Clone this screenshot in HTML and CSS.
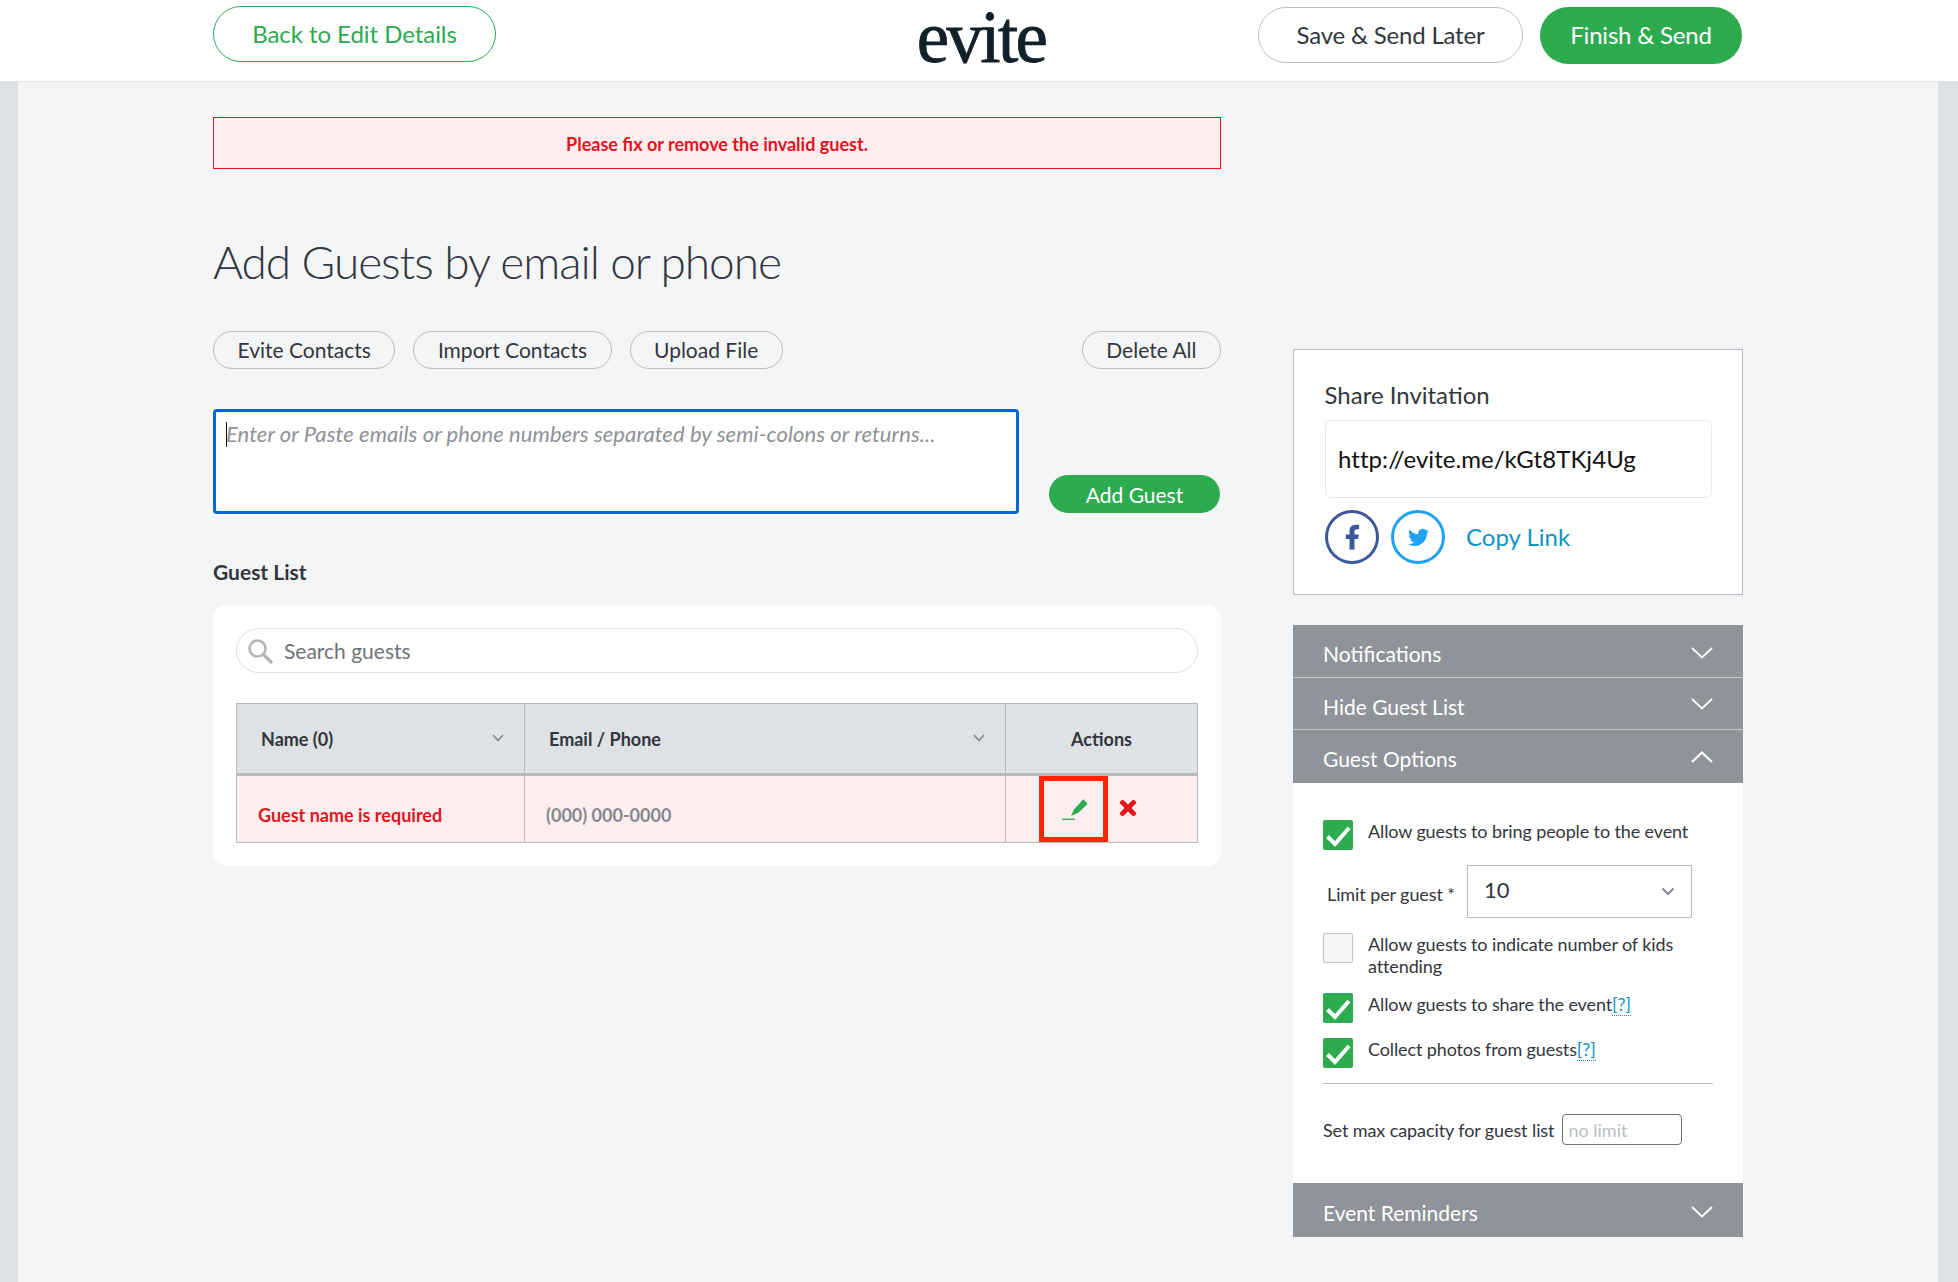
FILE: index.html
```html
<!DOCTYPE html>
<html lang="en">
<head>
<meta charset="utf-8">
<title>Add Guests</title>
<link rel="stylesheet" href="styles.css">
</head>
<body>
<header class="topbar">
  <div class="topbar-left"><a class="btn btn-outline-green">Back to Edit Details</a></div>
  <div class="logo">evite</div>
  <div class="topbar-right">
    <a class="btn btn-outline-gray">Save &amp; Send Later</a>
    <a class="btn btn-green">Finish &amp; Send</a>
  </div>
</header>
<main class="page">
  <section class="left">
    <div class="alert">Please fix or remove the invalid guest.</div>
    <h1 class="title">Add Guests by email or phone</h1>
    <div class="pills">
      <a class="pill">Evite Contacts</a>
      <a class="pill">Import Contacts</a>
      <a class="pill">Upload File</a>
      <a class="pill pill-end">Delete All</a>
    </div>
    <div class="entry">
      <div class="entry-field">
        <textarea class="entry-input" placeholder="Enter or Paste emails or phone numbers separated by semi-colons or returns..."></textarea>
        <span class="caret"></span>
      </div>
      <a class="add-guest">Add Guest</a>
    </div>
    <h2 class="list-title">Guest List</h2>
    <div class="card">
      <div class="search">
        <svg class="search-icon" viewBox="0 0 26 26" width="26" height="26"><circle cx="10.5" cy="10.5" r="8" fill="none" stroke="#b3b5b9" stroke-width="2.6"/><path d="M16.5 16.5L24 24" stroke="#b3b5b9" stroke-width="3.4" stroke-linecap="round"/></svg>
        <input class="search-input" placeholder="Search guests">
      </div>
      <table class="guests">
        <thead>
          <tr>
            <th class="col-name"><div class="th-in"><span>Name (0)</span><svg viewBox="0 0 12 8" width="12" height="8"><path d="M1 1l5 5.5L11 1" fill="none" stroke="#85888e" stroke-width="1.7"/></svg></div></th>
            <th class="col-email"><div class="th-in"><span>Email / Phone</span><svg viewBox="0 0 12 8" width="12" height="8"><path d="M1 1l5 5.5L11 1" fill="none" stroke="#85888e" stroke-width="1.7"/></svg></div></th>
            <th class="col-actions">Actions</th>
          </tr>
        </thead>
        <tbody>
          <tr>
            <td class="cell-error">Guest name is required</td>
            <td class="cell-phone">(000) 000-0000</td>
            <td class="cell-actions">
              <div class="actions">
                <a class="edit">
                  <svg viewBox="0 0 32 24" width="32" height="24"><path d="M13 19l3-6.700L25.300 2.300l4.400 4.400-9.400 9z" fill="#2dab4f"/><path d="M4 22.300h13" stroke="#2dab4f" stroke-width="1.300"/></svg>
                </a>
                <a class="remove">
                  <svg viewBox="0 0 16 16" width="16" height="16"><path d="M2.500 2.500l11 11M13.500 2.500l-11 11" stroke="#e0161f" stroke-width="4.800" stroke-linecap="round"/></svg>
                </a>
              </div>
            </td>
          </tr>
        </tbody>
      </table>
    </div>
  </section>
  <aside class="right">
    <div class="share">
      <h3 class="share-title">Share Invitation</h3>
      <div class="share-url">http://evite.me/kGt8TKj4Ug</div>
      <div class="share-actions">
        <a class="social social-fb"><svg viewBox="0 0 24 24" width="30" height="30"><path fill="#3b5998" d="M14 13.500h2.800l.7-3.600H14V7.600c0-1 .4-1.900 2-1.900h1.700V2.400C17.300 2.300 16 2.200 14.900 2.200 12 2.200 10 4 10 7.100v2.800H7v3.600h3V22h4z"/></svg></a>
        <a class="social social-tw"><svg viewBox="0 0 24 24" width="21" height="21"><path fill="#1da1f2" d="M23.953 4.570a10 10 0 01-2.825.775 4.958 4.958 0 002.163-2.723c-.951.555-2.005.959-3.127 1.184a4.920 4.920 0 00-8.384 4.482C7.690 8.095 4.067 6.130 1.640 3.162a4.822 4.822 0 00-.666 2.475c0 1.710.870 3.213 2.188 4.096a4.904 4.904 0 01-2.228-.616v.060a4.923 4.923 0 003.946 4.827 4.996 4.996 0 01-2.212.085 4.936 4.936 0 004.604 3.417 9.867 9.867 0 01-6.102 2.105c-.390 0-.779-.023-1.170-.067a13.995 13.995 0 007.557 2.209c9.053 0 13.998-7.496 13.998-13.985 0-.210 0-.420-.015-.630A9.935 9.935 0 0024 4.590z"/></svg></a>
        <a class="copy-link">Copy Link</a>
      </div>
    </div>
    <div class="accordion">
      <div class="acc-head acc-first"><span>Notifications</span><svg viewBox="0 0 22 12" width="22" height="12"><path d="M1 1l10 9.500L21 1" fill="none" stroke="#fff" stroke-width="1.800"/></svg></div>
      <div class="acc-head acc-second"><span>Hide Guest List</span><svg viewBox="0 0 22 12" width="22" height="12"><path d="M1 1l10 9.500L21 1" fill="none" stroke="#fff" stroke-width="1.800"/></svg></div>
      <div class="acc-head acc-open"><span>Guest Options</span><svg viewBox="0 0 22 12" width="22" height="12"><path d="M1 11l10-9.500L21 11" fill="none" stroke="#fff" stroke-width="2.200"/></svg></div>
      <div class="acc-body">
        <div class="option">
          <span class="check check-on"><svg viewBox="0 0 30 30" width="30" height="30"><path d="M4.500 16.500l7.500 7.500L26 8" fill="none" stroke="#fff" stroke-width="4"/></svg></span>
          <span class="option-text">Allow guests to bring people to the event</span>
        </div>
        <div class="limit">
          <span class="limit-label">Limit per guest *</span>
          <div class="select"><span class="select-value">10</span><svg viewBox="0 0 14 9" width="14" height="9"><path d="M1.500 1.500L7 7l5.500-5.500" fill="none" stroke="#85888e" stroke-width="2.200"/></svg></div>
        </div>
        <div class="option">
          <span class="check"></span>
          <span class="option-text">Allow guests to indicate number of kids attending</span>
        </div>
        <div class="option option-gap">
          <span class="check check-on"><svg viewBox="0 0 30 30" width="30" height="30"><path d="M4.500 16.500l7.500 7.500L26 8" fill="none" stroke="#fff" stroke-width="4"/></svg></span>
          <span class="option-text">Allow guests to share the event<a class="help">[?]</a></span>
        </div>
        <div class="option">
          <span class="check check-on"><svg viewBox="0 0 30 30" width="30" height="30"><path d="M4.500 16.500l7.500 7.500L26 8" fill="none" stroke="#fff" stroke-width="4"/></svg></span>
          <span class="option-text">Collect photos from guests<a class="help">[?]</a></span>
        </div>
        <hr class="rule">
        <div class="capacity">
          <span class="capacity-label">Set max capacity for guest list</span>
          <input class="capacity-input" placeholder="no limit">
        </div>
      </div>
      <div class="acc-head acc-last"><span>Event Reminders</span><svg viewBox="0 0 22 12" width="22" height="12"><path d="M1 1l10 9.500L21 1" fill="none" stroke="#fff" stroke-width="1.800"/></svg></div>
    </div>
  </aside>
</main>
</body>
</html>
```
FILE: styles.css
```css
* { box-sizing: border-box; }
html, body { margin: 0; height: 1282px; overflow: hidden; }
body { font-family: Lato, "Liberation Sans", sans-serif; color: #33363d; background: #f4f5f7; }
a { display: inline-block; }
h1, h2, h3 { margin: 0; font-weight: 400; }

.topbar {
  height: 82px;
  border-bottom: 1px solid #e1e3e6;
  background: #fff;
  padding: 6px 216px 0 213px;
  display: grid;
  grid-template-columns: 1fr auto 1fr;
  align-items: start;
}
.topbar-right { display: flex; justify-content: flex-end; gap: 17px; padding-top: 1px; }
.btn { border-radius: 29px; font-size: 24px; display: flex; align-items: center; justify-content: center; padding-bottom: 2px; }
.btn-outline-green { width: 283px; height: 56px; border: 1px solid #2dab4f; color: #2dab4f; letter-spacing: -0.05px; }
.btn-outline-gray { width: 265px; height: 56px; border: 1px solid #bfc0c4; color: #33363d; letter-spacing: -0.2px; }
.btn-green { width: 202px; height: 57px; background: #2dab4f; color: #fff; letter-spacing: -0.2px; }
.logo {
  font-family: "Liberation Serif", serif;
  font-size: 73px;
  line-height: 76px;
  margin-top: -6px;
  letter-spacing: -2.700px;
  color: #12202a;
  -webkit-text-stroke: 0.8px #12202a;
  margin-left: 7px;
}

.page { display: flex; height: 1200px; border-left: 18px solid #dee2e4; border-right: 20px solid #dee2e4; }
.left { width: 1008px; margin-left: 195px; }
.right { width: 450px; margin-left: 72px; padding-top: 267px; }

.alert {
  margin-top: 35px;
  height: 52px;
  padding-top: 1px;
  border: 1px solid #e0161f;
  background: #feeef0;
  color: #e0161f;
  font-size: 18px;
  font-weight: 700;
  display: flex;
  align-items: center;
  justify-content: center;
}
.title { margin-top: 65px; font-size: 46px; font-weight: 300; line-height: 56px; letter-spacing: -1.050px; color: #33363f; }
.pills { margin-top: 41px; display: flex; gap: 18px; }
.pill {
  height: 38px;
  padding: 0 23.500px;
  border: 1px solid #bcbdc2;
  border-radius: 19px;
  font-size: 21px;
  line-height: 36px;
}
.pill-end { margin-left: auto; }

.entry { margin-top: 40px; display: flex; align-items: flex-end; justify-content: space-between; }
.entry-field { position: relative; width: 806px; height: 105px; }
.entry-input {
  display: block;
  width: 100%;
  height: 100%;
  border: 3px solid #0366d6;
  border-radius: 4px;
  box-shadow: 0 0 0 1px #fff;
  padding: 9px 10px;
  font: 22px/26px Lato, sans-serif;
  letter-spacing: 0.080px;
  resize: none;
  outline: none;
  background: #fff;
}
.entry-input::placeholder { color: #8e9197; font-style: italic; opacity: 1; }
.caret { position: absolute; left: 13px; top: 13px; width: 1px; height: 25px; background: #111; }
.add-guest {
  width: 171px;
  height: 38px;
  margin: 0 1px 1px 0;
  border-radius: 19px;
  background: #2dab4f;
  color: #fff;
  font-size: 21px;
  line-height: 40px;
  text-align: center;
}

.list-title { margin-top: 46px; font-size: 21px; line-height: 24px; font-weight: 700; }
.card { margin-top: 21px; padding: 23px; background: #fff; border-radius: 14px; }
.search {
  height: 45px;
  border: 1px solid #dfe1e4;
  border-radius: 23px;
  display: flex;
  align-items: center;
  padding-left: 10px;
  gap: 11px;
}
.search-input { border: 0; outline: 0; flex: 1; font: 21px Lato, sans-serif; background: transparent; padding: 0; }
.search-input::placeholder { color: #6f7278; opacity: 1; }

.guests { margin-top: 30px; width: 962px; border-collapse: collapse; table-layout: fixed; }
.guests th {
  height: 71px;
  background: #dee2e4;
  border: 1px solid #b7b9bd;
  border-bottom-width: 3px;
  font-size: 18px;
  font-weight: 700;
  text-align: left;
  padding: 0 20px 0 24px;
}
.col-name { width: 288px; }
.col-email { width: 481px; }
.guests th.col-actions { text-align: center; padding: 0; }
.th-in { display: flex; align-items: center; justify-content: space-between; }
.th-in svg { margin-top: -2px; }
.guests td { height: 68px; background: #feeef0; border: 1px solid #b7b9bd; padding: 0; font-size: 18px; }
.guests .cell-error { color: #e0161f; font-weight: 700; padding: 11px 0 0 21px; }
.guests .cell-phone { color: #85888f; padding: 11px 0 0 21px; font-weight: 700; }
.cell-actions { vertical-align: top; }
.actions { display: flex; align-items: flex-start; padding-left: 33px; }
.edit {
  width: 69px;
  height: 66px;
  border: 5px solid #ff2600;
  padding: 16px 0 0 14px;
}
.edit svg { display: block; }
.remove { margin: 24px 0 0 12px; }
.remove svg { display: block; }

.share {
  height: 246px;
  border: 1px solid #b9bcc4;
  background: #fff;
  padding: 31px 31px 0;
}
.share-title { font-size: 24px; line-height: 28px; margin-left: -0.500px; }
.share-url {
  margin-top: 11px;
  width: 387px;
  height: 78px;
  border: 1px solid #e4e6ea;
  border-radius: 6px;
  padding-left: 12px;
  font-size: 24px;
  line-height: 76px;
  letter-spacing: 0.050px;
  color: #111;
}
.share-actions { margin-top: 12px; display: flex; align-items: center; gap: 12px; }
.social {
  width: 54px;
  height: 54px;
  border-radius: 50%;
  border: 3px solid;
  display: flex;
  align-items: center;
  justify-content: center;
}
.social-fb { border-color: #3b5998; }
.social-tw { border-color: #1da1f2; }
.copy-link { margin-left: 9px; padding-bottom: 2px; font-size: 24px; color: #0d94c4; }

.accordion { margin-top: 30px; }
.acc-head {
  padding: 0 30px;
  background: #90939a;
  color: #fff;
  font-size: 21px;
  display: flex;
  align-items: center;
  justify-content: space-between;
}
.acc-head span { padding-top: 5px; }
.acc-first { height: 53px; border-bottom: 1px solid #c5c7cb; }
.acc-first svg { margin-top: 3px; }
.acc-second { height: 52px; border-bottom: 1px solid #c5c7cb; }
.acc-open { height: 53px; }
.acc-open span { padding-top: 3px; }
.acc-last { height: 54px; }
.acc-last svg { margin-top: 4px; }
.acc-body { background: #fff; padding: 37px 30px 38px; height: 400px; }
.option { display: flex; gap: 15px; margin-bottom: 15px; font-size: 18px; line-height: 22px; letter-spacing: -0.120px; }
.option-gap { margin-top: 16px; }
.check {
  flex: none;
  width: 30px;
  height: 30px;
  border: 1px solid #c4c6cb;
  border-radius: 2px;
  background: #f4f5f7;
}
.check svg { display: block; }
.check-on { border: 0; background: #2dab4f; }
.help { color: #0d94c4; border-bottom: 1px dotted #0d94c4; line-height: 21px; }
.limit { display: flex; align-items: center; margin-bottom: 15px; padding-left: 4px; font-size: 18px; letter-spacing: -0.100px; }
.limit-label { width: 140px; padding-top: 4px; }
.select {
  width: 225px;
  height: 53px;
  border: 1px solid #b7b9bd;
  padding: 0 16px;
  font-size: 22px;
  display: flex;
  align-items: center;
  justify-content: space-between;
}
.select-value { padding-bottom: 4px; }
.rule { margin: 15px 0 30px; width: 390px; border: 0; border-top: 1px solid #bcbec2; }
.capacity { display: flex; align-items: center; font-size: 18px; gap: 8px; }
.capacity-label { letter-spacing: -0.100px; }
.capacity-input {
  width: 120px;
  height: 31px;
  border: 1px solid #6f7175;
  border-radius: 4px;
  padding: 0 5px;
  font: 18px Lato, sans-serif;
  background: #fff;
  outline: 0;
}
.capacity-input::placeholder { color: #bcbec2; opacity: 1; }
```
